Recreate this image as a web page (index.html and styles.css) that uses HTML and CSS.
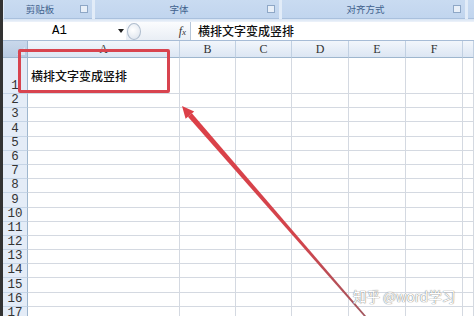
FILE: index.html
```html
<!DOCTYPE html>
<html lang="zh-CN">
<head>
    <meta charset="UTF-8">
    <title>横排文字变成竖排</title>
    <link rel="stylesheet" href="styles.css">
</head>
<body>
    <div class="window">
        <div class="ribbon">
            <div class="group clip"><span>剪贴板</span><i class="launcher"></i></div>
            <div class="group font"><span>字体</span><i class="launcher"></i></div>
            <div class="group align"><span>对齐方式</span><i class="launcher"></i></div>
            <div class="group more"></div>
        </div>
        <div class="band"></div>
        <div class="formula-bar">
            <div class="name-box">A1</div>
            <div class="name-drop"><i></i></div>
            <div class="fx-area">
                <div class="splitter"></div>
                <span class="fx"><i>f</i><small>x</small></span>
            </div>
            <div class="formula">横排文字变成竖排</div>
        </div>

        <div class="sheet">
            <div class="row head">
                <div class="corner"></div>
                <div class="ch">A</div><div class="ch">B</div><div class="ch">C</div><div class="ch">D</div><div class="ch">E</div><div class="ch">F</div><div class="ch"></div>
            </div>
            <div class="row tall">
                <div class="rh">1</div>
                <div class="cell text">横排文字变成竖排</div><div class="cell"></div><div class="cell"></div><div class="cell"></div><div class="cell"></div><div class="cell"></div><div class="cell"></div>
            </div>
            <div class="row"><div class="rh">2</div><div class="cell"></div><div class="cell"></div><div class="cell"></div><div class="cell"></div><div class="cell"></div><div class="cell"></div><div class="cell"></div></div>
            <div class="row"><div class="rh">3</div><div class="cell"></div><div class="cell"></div><div class="cell"></div><div class="cell"></div><div class="cell"></div><div class="cell"></div><div class="cell"></div></div>
            <div class="row"><div class="rh">4</div><div class="cell"></div><div class="cell"></div><div class="cell"></div><div class="cell"></div><div class="cell"></div><div class="cell"></div><div class="cell"></div></div>
            <div class="row"><div class="rh">5</div><div class="cell"></div><div class="cell"></div><div class="cell"></div><div class="cell"></div><div class="cell"></div><div class="cell"></div><div class="cell"></div></div>
            <div class="row"><div class="rh">6</div><div class="cell"></div><div class="cell"></div><div class="cell"></div><div class="cell"></div><div class="cell"></div><div class="cell"></div><div class="cell"></div></div>
            <div class="row"><div class="rh">7</div><div class="cell"></div><div class="cell"></div><div class="cell"></div><div class="cell"></div><div class="cell"></div><div class="cell"></div><div class="cell"></div></div>
            <div class="row"><div class="rh">8</div><div class="cell"></div><div class="cell"></div><div class="cell"></div><div class="cell"></div><div class="cell"></div><div class="cell"></div><div class="cell"></div></div>
            <div class="row"><div class="rh">9</div><div class="cell"></div><div class="cell"></div><div class="cell"></div><div class="cell"></div><div class="cell"></div><div class="cell"></div><div class="cell"></div></div>
            <div class="row"><div class="rh">10</div><div class="cell"></div><div class="cell"></div><div class="cell"></div><div class="cell"></div><div class="cell"></div><div class="cell"></div><div class="cell"></div></div>
            <div class="row"><div class="rh">11</div><div class="cell"></div><div class="cell"></div><div class="cell"></div><div class="cell"></div><div class="cell"></div><div class="cell"></div><div class="cell"></div></div>
            <div class="row"><div class="rh">12</div><div class="cell"></div><div class="cell"></div><div class="cell"></div><div class="cell"></div><div class="cell"></div><div class="cell"></div><div class="cell"></div></div>
            <div class="row"><div class="rh">13</div><div class="cell"></div><div class="cell"></div><div class="cell"></div><div class="cell"></div><div class="cell"></div><div class="cell"></div><div class="cell"></div></div>
            <div class="row"><div class="rh">14</div><div class="cell"></div><div class="cell"></div><div class="cell"></div><div class="cell"></div><div class="cell"></div><div class="cell"></div><div class="cell"></div></div>
            <div class="row"><div class="rh">15</div><div class="cell"></div><div class="cell"></div><div class="cell"></div><div class="cell"></div><div class="cell"></div><div class="cell"></div><div class="cell"></div></div>
            <div class="row"><div class="rh">16</div><div class="cell"></div><div class="cell"></div><div class="cell"></div><div class="cell"></div><div class="cell"></div><div class="cell"></div><div class="cell"></div></div>
            <div class="row"><div class="rh">17</div><div class="cell"></div><div class="cell"></div><div class="cell"></div><div class="cell"></div><div class="cell"></div><div class="cell"></div><div class="cell"></div></div>
        </div>

        <!-- annotation drawn over the sheet -->
        <div class="highlight"></div>
        <svg class="arrow" width="474" height="316" viewBox="0 0 474 316">
            <defs>
                <linearGradient id="shaft" gradientUnits="userSpaceOnUse" x1="190" y1="115" x2="372" y2="324">
                    <stop offset="0" stop-color="#dc4048"/>
                    <stop offset="0.6" stop-color="#d2444c"/>
                    <stop offset="1" stop-color="#9c5860"/>
                </linearGradient>
            </defs>
            <polygon points="187.9,116.8 191.9,113.3 373.1,324.2 371.9,325.2" fill="url(#shaft)"/>
            <polygon points="182,106 194.2,111.4 185.6,118.8" fill="#dc4048"/>
        </svg>
        <div class="watermark">知乎 @word学习</div>
    </div>
</body>
</html>
```

FILE: styles.css
```css
body {
    margin: 0;
    font-family: "Noto Sans CJK SC", sans-serif;
}
.window {
    position: relative;
    width: 474px;
    height: 316px;
    overflow: hidden;
    border-left: 3px solid #333;
    box-sizing: border-box;
    background: #fff;
}

/* ribbon group labels */
.ribbon {
    display: flex;
    height: 19px;
    gap: 3px;
    padding-left: 1px;
    background: #e2ecf8;
}
.group {
    display: flex;
    align-items: center;
    background: linear-gradient(#c9dbf1, #c1d5ee);
    border-bottom: 1px solid #a9c0dd;
    box-sizing: border-box;
    font-size: 9.5px;
    color: #40618d;
}
.group span {
    flex: 1;
    text-align: center;
    padding-left: 2px;
}
.clip { width: 88px; }
.font { width: 184px; }
.align { width: 183px; }
.more { flex: 1; }
.launcher {
    width: 6px;
    height: 6px;
    margin: 0 4px 0 6px;
    border: 1px solid #8ea7c6;
    background: #e8eff8;
}
.band {
    height: 3px;
    background: linear-gradient(#d6e3f3, #eef3fa);
}

/* formula bar */
.formula-bar {
    display: flex;
    height: 18px;
    background: #fff;
    border-bottom: 1px solid #a7bcd6;
    font-size: 12px;
}
.name-box {
    width: 113px;
    line-height: 18px;
    text-align: center;
    font-family: "Liberation Mono", monospace;
    font-size: 12.5px;
}
.name-drop {
    width: 10px;
    display: flex;
    align-items: center;
    justify-content: center;
}
.name-drop i {
    border-left: 3px solid transparent;
    border-right: 3px solid transparent;
    border-top: 4px solid #222;
}
.fx-area {
    display: flex;
    align-items: center;
    justify-content: space-between;
    width: 64px;
    background: linear-gradient(#fbfcfe, #e9eef5);
    border-right: 1px solid #b6c6d9;
}
.splitter {
    width: 12px;
    height: 15px;
    margin-left: 1px;
    border-radius: 50%;
    border: 1px solid #aebccd;
    background: radial-gradient(circle at 40% 40%, #ffffff, #d9e1eb);
}
.fx {
    margin-right: 4px;
    font-family: "Liberation Serif", serif;
    font-style: italic;
    font-size: 12px;
    color: #333;
}
.fx small {
    font-size: 9px;
}
.formula {
    flex: 1;
    padding-left: 7px;
    line-height: 18px;
    font-size: 12px;
    font-weight: 500;
    color: #111;
}

/* sheet grid */
.row {
    display: grid;
    grid-template-columns: 25px 152px 56px 56px 57px 57px 57px 1fr;
    height: 14.2px;
}
.row.head { height: 17px; }
.row.tall { height: 36px; }
.rh {
    display: flex;
    align-items: flex-end;
    justify-content: center;
    background: #e4ecf7;
    border-right: 1px solid #9eb6ce;
    border-bottom: 1px solid #c5d4e6;
    box-sizing: border-box;
    font-family: "Liberation Mono", monospace;
    font-size: 12.5px;
    line-height: 13px;
    color: #333;
}
.cell {
    border-right: 1px solid #d4d9e1;
    border-bottom: 1px solid #d4d9e1;
    box-sizing: border-box;
}
.cell.text {
    display: flex;
    align-items: center;
    padding-left: 3px;
    font-size: 12px;
    font-weight: 500;
    color: #111;
}
.corner {
    position: relative;
    background: linear-gradient(#c9d8eb, #b9cbe2);
    border-right: 1px solid #9eb6ce;
    border-bottom: 1px solid #9eb6ce;
    box-sizing: border-box;
}
.corner::after {
    content: "";
    position: absolute;
    right: 2px;
    bottom: 2px;
    border-left: 8px solid transparent;
    border-bottom: 8px solid #dbe5f2;
}
.ch {
    background: linear-gradient(#f2f6fb, #dce6f3);
    border-right: 1px solid #c1d0e2;
    border-bottom: 1px solid #9eb6ce;
    box-sizing: border-box;
    text-align: center;
    font-family: "Liberation Serif", serif;
    font-size: 12px;
    line-height: 16px;
    color: #333;
}

/* annotation overlay */
.highlight {
    position: absolute;
    left: 15px;
    top: 49px;
    width: 152px;
    height: 44px;
    border: 3px solid #d8444f;
    border-radius: 2px;
    box-sizing: border-box;
}
.arrow {
    position: absolute;
    left: -3px;
    top: 0;
}
.watermark {
    position: absolute;
    left: 350px;
    top: 286px;
    font-size: 13.5px;
    color: #fff;
    text-shadow: 0 0 1px #7d7d7d, 0 0 1px #7d7d7d;
    white-space: nowrap;
}
```
